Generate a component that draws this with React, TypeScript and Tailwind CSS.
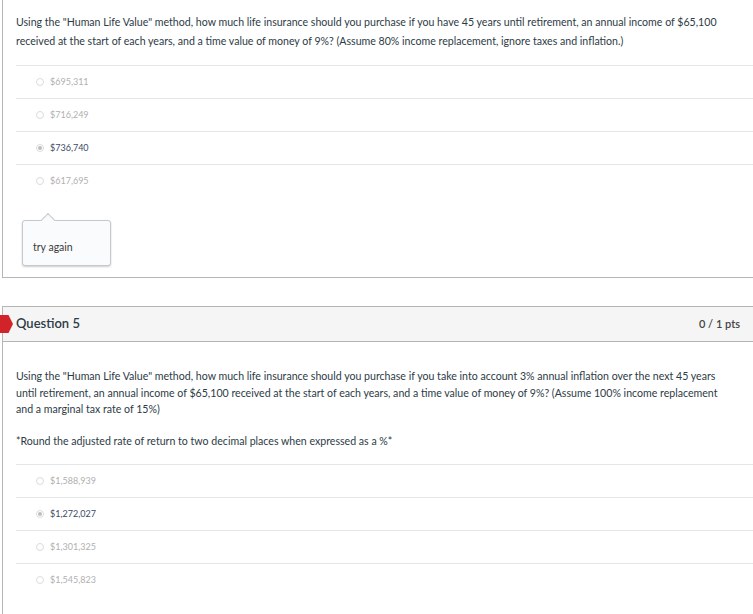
import React from 'react';

const q4Answers = [
  { id: 'a', text: '$695,311', selected: false },
  { id: 'b', text: '$716,249', selected: false },
  { id: 'c', text: '$736,740', selected: true },
  { id: 'd', text: '$617,695', selected: false },
];

const q5Answers = [
  { id: 'a', text: '$1,588,939', selected: false },
  { id: 'b', text: '$1,272,027', selected: true },
  { id: 'c', text: '$1,301,325', selected: false },
  { id: 'd', text: '$1,545,823', selected: false },
];

function Radio({ checked }: { checked: boolean }) {
  return (
    <span className="w-[8px] h-[8px] rounded-full border border-[#dcdcdc] bg-white flex items-center justify-center shrink-0">
      {checked && <span className="w-[4px] h-[4px] rounded-full bg-[#bdbdbd]" />}
    </span>
  );
}

function AnswerList({ answers }: { answers: typeof q4Answers }) {
  return (
    <div className="ml-[13px]">
      {answers.map(a => (
        <div key={a.id} className="h-[33px] border-t border-[#e4e6e8] flex items-center gap-[6px] pl-[20px]">
          <Radio checked={a.selected} />
          <span className={`text-[9px] ${a.selected ? 'text-[#3b4a66]' : 'text-[#b0b0b0]'}`}>{a.text}</span>
        </div>
      ))}
    </div>
  );
}

export default function App() {
  return (
    <div className="w-[753px] h-[614px] overflow-hidden bg-white text-[#2d3b45]" style={{ fontFamily: 'Lato, "Open Sans", sans-serif' }}>
      {/* previous question, body only */}
      <div className="ml-[2px] w-[760px] h-[278px] border-l border-b border-[#b5b5b5]">
        <p className="pl-[13px] pr-[20px] pt-[13px] text-[10.6px] leading-[19px]">
          Using the "Human Life Value" method, how much life insurance should you purchase if you have 45 years until retirement, an annual income of $65,100 received at the start of each years, and a time value of money of 9%? (Assume 80% income replacement, ignore taxes and inflation.)
        </p>
        <div className="mt-[14px]">
          <AnswerList answers={q4Answers} />
        </div>
        <div className="relative ml-[19px] mt-[23px] w-[89px] h-[46px] rounded-[3px] border border-[#c4c9ce] bg-[#fafbfc] shadow-[0_1px_2px_rgba(0,0,0,0.2)] flex items-center pl-[10px] pt-[9px]">
          <span className="absolute -top-[6px] left-[20px] w-[10px] h-[10px] rotate-45 bg-[#fafbfc] border-l border-t border-[#c4c9ce]" />
          <span className="text-[10.5px] text-[#3a3a3a]">try again</span>
        </div>
      </div>

      {/* question 5 */}
      <div className="relative ml-[2px] mt-[28px] w-[760px] border-l border-t border-[#b5b5b5]">
        <div className="relative h-[35px] bg-[#f5f5f5] border-b border-[#b5b5b5] flex items-center justify-between pl-[13px] pr-[22px]">
          <svg className="absolute -left-[3px] top-[8px]" width="13" height="18" viewBox="0 0 13 18">
            <path d="M0 0 H8.5 L13 9 L8.5 18 H0 Z" fill="#d2232a" />
          </svg>
          <span className="text-[13px] font-semibold text-[#2d3b45]">Question 5</span>
          <span className="text-[11px] font-semibold text-[#444]">0 / 1 pts</span>
        </div>
        <div className="pl-[13px] pr-[32px] pt-[26px] text-[10.6px] leading-[16.5px]">
          <p>
            Using the "Human Life Value" method, how much life insurance should you purchase if you take into account 3% annual inflation over the next 45 years until retirement, an annual income of $65,100 received at the start of each years, and a time value of money of 9%? (Assume 100% income replacement and a marginal tax rate of 15%)
          </p>
          <p className="mt-[15px]">*Round the adjusted rate of return to two decimal places when expressed as a %*</p>
        </div>
        <div className="mt-[15px]">
          <AnswerList answers={q5Answers} />
        </div>
        <div className="h-[40px]" />
      </div>
    </div>
  );
}
